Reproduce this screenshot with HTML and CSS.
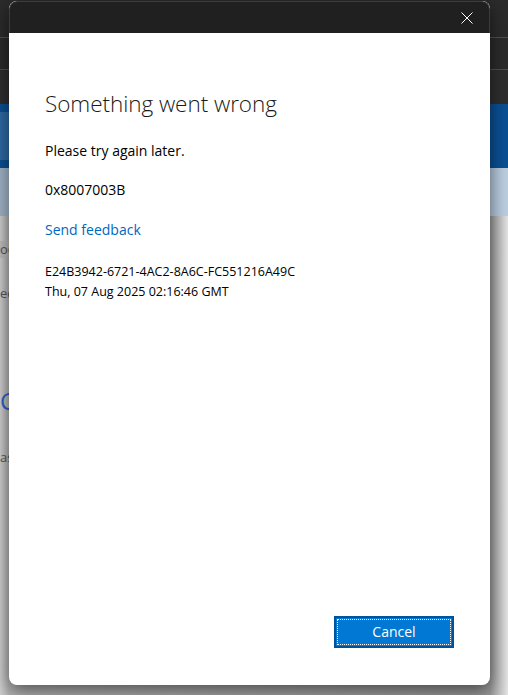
FILE: index.html
```html
<!DOCTYPE html>
<html>
<head>
<meta charset="utf-8">
<link rel="stylesheet" href="styles.css">
</head>
<body>
<div class="desktop">
  <div class="bar bar-top"></div>
  <div class="bar bar-mid"></div>
  <div class="bar bar-low"></div>
  <div class="band-blue"><div class="band-blue-inner"></div></div>
  <div class="band-light"></div>
  <div class="page">
    <div class="frag frag-row">oo</div>
    <div class="frag frag-ed">ed</div>
    <div class="frag frag-big">C(</div>
    <div class="frag frag-as">as</div>
  </div>
</div>

<div class="dialog">
  <div class="titlebar">
    <button class="close" aria-label="Close">
      <svg width="12" height="12" viewBox="0 0 12 12"><path d="M0.5 0.5 L11.5 11.5 M11.5 0.5 L0.5 11.5" stroke="#ffffff" stroke-width="1" fill="none"/></svg>
    </button>
  </div>
  <div class="content">
    <h1 class="title">Something went wrong</h1>
    <p class="msg">Please try again later.</p>
    <p class="code">0x8007003B</p>
    <a class="link" href="#">Send feedback</a>
    <div class="meta">
      <div>E24B3942-6721-4AC2-8A6C-FC551216A49C</div>
      <div>Thu, 07 Aug 2025 02:16:46 GMT</div>
    </div>
  </div>
  <div class="footer">
    <button class="cancel"><span class="focus">Cancel</span></button>
  </div>
</div>
</body>
</html>
```
FILE: styles.css
```css
* { box-sizing: border-box; }
html, body { margin: 0; padding: 0; }
body {
  width: 508px;
  height: 695px;
  overflow: hidden;
  background: #e3e3e3;
  font-family: "Open Sans", "Noto Sans", sans-serif;
  position: relative;
}
.desktop {
  display: flex;
  flex-direction: column;
  height: 695px;
}
.bar { background: #2b2b2b; }
.bar-top { height: 38px; border-bottom: 1px solid #4f4f4f; }
.bar-mid { height: 32px; border-bottom: 1px solid #4f4f4f; }
.bar-low { height: 34px; background: #2e2e2e; }
.band-blue {
  height: 64px;
  background: #0b4f94;
  padding: 8px 0;
}
.band-blue-inner { height: 48px; width: 9px; background: #2e6aa3; }
.band-light {
  height: 48px;
  background: linear-gradient(90deg, #9eb1c4 0, #a7bacd 9px, #b3c7db 490px, #bccfe1 508px);
}
.page {
  flex: 1;
  background: linear-gradient(90deg, #cfcfcf 0, #b5b5b5 9px, #9a9a9a 490px, #e4e4e4 508px);
  display: flex;
  flex-direction: column;
  align-items: flex-start;
}
.frag {
  white-space: nowrap;
  color: #555;
  font-size: 13px;
  padding-left: 0;
}
.frag-row { margin-top: 25px; height: 17px; line-height: 17px; width: 30px; background: #bdbdbd; }
.frag-ed { margin-top: 27px; line-height: 16px; }
.frag-big { margin-top: 86px; color: #2a63c8; font-size: 24px; line-height: 28px; }
.frag-as { margin-top: 34px; line-height: 16px; }

.dialog {
  position: absolute;
  left: 9px;
  top: 1px;
  width: 481px;
  height: 684px;
  background: #ffffff;
  border-radius: 8px;
  box-shadow: 0 6px 18px rgba(0,0,0,0.55);
  display: flex;
  flex-direction: column;
  overflow: hidden;
}
.titlebar {
  height: 32px;
  background: #202020;
  border-top: 1px solid #3c3c3c;
  border-left: 1px solid #3c3c3c;
  border-right: 1px solid #3c3c3c;
  border-radius: 8px 8px 0 0;
  display: flex;
  justify-content: flex-end;
  align-items: center;
  padding-right: 10px;
}
.close {
  background: none;
  border: 0;
  padding: 0;
  width: 24px;
  height: 24px;
  display: flex;
  align-items: center;
  justify-content: center;
}
.content {
  flex: 1;
  padding: 56px 36px 0 36px;
  color: #000;
}
.title {
  margin: 0;
  font-weight: 300;
  font-size: 22.5px;
  line-height: 30px;
  letter-spacing: -0.05px;
  color: #1a1a1a;
}
.msg, .code {
  margin: 0;
  font-size: 14px;
  line-height: 20px;
}
.msg { margin-top: 22px; }
.code { margin-top: 19px; }
.link {
  display: block;
  margin-top: 20px;
  font-size: 14px;
  line-height: 20px;
  color: #0067c0;
  text-decoration: none;
}
.meta {
  margin-top: 22px;
  font-size: 12.5px;
  line-height: 20px;
}
.footer {
  display: flex;
  justify-content: flex-end;
  padding: 0 36px 37px 0;
}
.cancel {
  width: 120px;
  height: 32px;
  background: #0078d4;
  border: 2px solid #005299;
  padding: 1px;
  display: flex;
  font-family: inherit;
}
.focus {
  flex: 1;
  border: 1px dotted #ffffff;
  color: #ffffff;
  font-size: 14px;
  display: flex;
  align-items: center;
  justify-content: center;
  padding-bottom: 1px;
}
```
